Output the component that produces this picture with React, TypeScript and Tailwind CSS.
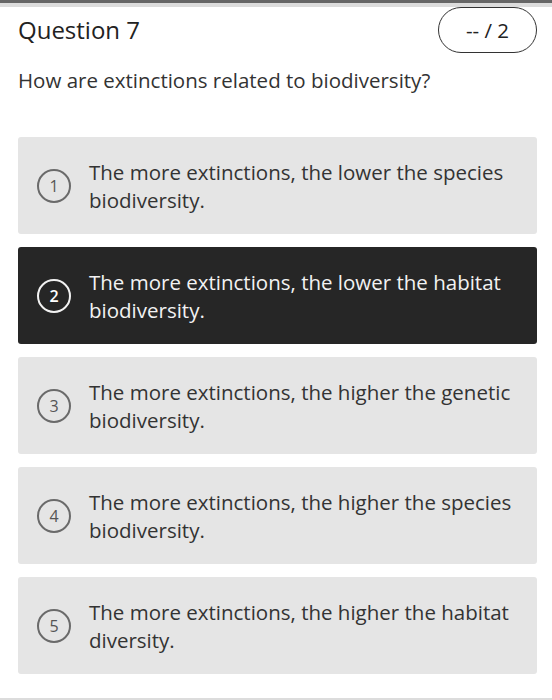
import React from "react";

const options = [
  { n: 1, text: "The more extinctions, the lower the species biodiversity.", selected: false },
  { n: 2, text: "The more extinctions, the lower the habitat biodiversity.", selected: true },
  { n: 3, text: "The more extinctions, the higher the genetic biodiversity.", selected: false },
  { n: 4, text: "The more extinctions, the higher the species biodiversity.", selected: false },
  { n: 5, text: "The more extinctions, the higher the habitat diversity.", selected: false },
];

export default function App() {
  return (
    <div className="w-[552px] h-[700px] bg-white flex flex-col text-[#333333]" style={{ fontFamily: '"Open Sans", sans-serif' }}>
      <div className="h-[3px] bg-[#666666]" />
      <div className="h-[4px] bg-[#dcdcdc]" />
      <div className="flex items-center justify-between ml-[18px] mr-[15px]">
        <div className="text-[24px] leading-[30px] text-[#222222]">Question 7</div>
        <div className="w-[99px] h-[46px] rounded-full border-[1.5px] border-[#333333] flex items-center justify-center text-[20.5px] text-[#222222]">
          -- / 2
        </div>
      </div>
      <div className="ml-[18px] mt-[13px] text-[20.5px] leading-[28px] text-[#333333]">
        How are extinctions related to biodiversity?
      </div>
      <div className="mt-[43px] ml-[18px] mr-[15px] flex flex-col gap-[13px]">
        {options.map((o) => (
          <div
            key={o.n}
            className={
              o.selected
                ? "h-[97px] rounded-[3px] bg-[#262626] flex items-center pl-[19px] pr-[8px] text-[#f2f2f2]"
                : "h-[97px] rounded-[3px] bg-[#e5e5e5] flex items-center pl-[19px] pr-[8px] text-[#333333]"
            }
          >
            <div
              className={
                o.selected
                  ? "w-[34px] h-[34px] shrink-0 rounded-full border-[2px] border-[#f2f2f2] flex items-center justify-center text-[16px] font-semibold text-white"
                  : "w-[34px] h-[34px] shrink-0 rounded-full border-[2px] border-[#6a6a6a] flex items-center justify-center text-[16px] text-[#555555]"
              }
            >
              {o.n}
            </div>
            <div className="ml-[18px] text-[20.5px] leading-[28px]">{o.text}</div>
          </div>
        ))}
      </div>
      <div className="mt-auto h-[2px] bg-[#dcdcdc]" />
    </div>
  );
}
